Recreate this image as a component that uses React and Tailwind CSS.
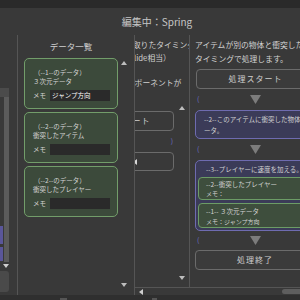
const jp = "font-['Noto_Sans_CJK_JP','Noto_Sans',sans-serif]";

function Tri({ dir = "down", className = "" }) {
  if (dir === "left") {
    return (
      <svg width="4" height="6" viewBox="0 0 4 6" className={className}>
        <polygon points="4,0 4,6 0,3" fill="currentColor" />
      </svg>
    );
  }
  const pts = dir === "up" ? "0,4 6,4 3,0" : "0,0 6,0 3,4";
  return (
    <svg width="6" height="4" viewBox="0 0 6 4" className={className}>
      <polygon points={pts} fill="currentColor" />
    </svg>
  );
}

function BigArrow() {
  return (
    <svg width="11" height="9" viewBox="0 0 11 9" className="text-[#7c7c7c]">
      <polygon points="0,0 11,0 5.5,9" fill="currentColor" />
    </svg>
  );
}

function DataCard({ index, name, memo }) {
  return (
    <div className="rounded-[5px] border-[1.5px] border-[#729d6a] bg-[#3c4a3b] pl-[8px] pr-[7px] pt-[9px] pb-[7px] text-[6.5px] leading-[9px] text-[#d4d4d4]">
      <p className="pl-[1px]">（--{index}--のデータ）</p>
      <p>{name}</p>
      <div className="mt-[4px] flex items-center gap-[5px]">
        <span className="w-[12px] shrink-0 whitespace-nowrap">メモ</span>
        <div className="h-[11px] flex-1 bg-[#2a2a2a] px-[2px] leading-[11px] text-white">{memo}</div>
      </div>
    </div>
  );
}

function Bracket({ mark = "(" }) {
  return (
    <div className="grid h-[15px] grid-cols-[1fr_auto_1fr] items-center">
      <span className="pl-[2px] text-[7px] leading-none text-[#6d6dc4]">{mark}</span>
      <BigArrow />
      <span />
    </div>
  );
}

function FlowButton({ label }) {
  return (
    <div className="flex h-[20px] items-center justify-center rounded-[4px] border border-[#6b6b6b] bg-[#3b3b3b] text-[8px] tracking-[1px] text-[#cfcfcf]">
      {label}
    </div>
  );
}

export default function App() {
  return (
    <div className={`flex h-[300px] w-[300px] flex-col overflow-hidden bg-[#393939] ${jp}`}>
      {/* window top */}
      <div className="h-[8px] bg-[#2a2a2a]" />
      <div className="flex h-[27px] items-center justify-center pl-[14px] text-[10px] text-[#c6c6c6]">
        編集中：Spring
      </div>

      <div className="flex min-h-0 flex-1">
        {/* left strip */}
        <div className="flex w-[18px] shrink-0 flex-col border-r border-[#555] pt-[53px] pb-[3px]">
          <div className="h-[9px] w-[9px] bg-[#4b4b4b]" />
          <div className="flex h-[166px] w-[9px]">
            <div className="flex w-[3px] flex-col justify-end gap-[3px] pb-[1px]">
              <div className="h-[18px] bg-[#5a569a]" />
              <div className="h-[14px] bg-[#5a569a]" />
            </div>
            <div className="ml-[1px] w-[5px] bg-[#5b5b5b]" />
          </div>
          <div className="flex h-[8px] w-[9px] items-center justify-center pl-[2px] text-[#cfcfcf]">
            <Tri />
          </div>
          <div className="mt-[1px] h-[21px] w-[9px] rounded-r-[3px] bg-[#4a4a4a]" />
        </div>

        {/* data list */}
        <div className="flex w-[117px] shrink-0 border-r border-[#555]">
          <div className="w-[102px] pl-[6px] pr-[2px]">
            <h2 className="pt-[4px] text-center text-[8.5px] leading-[14px] text-[#d0d0d0]">データ一覧</h2>
            <div className="mt-[5px] flex flex-col gap-[3px]">
              <DataCard index="1" name="３次元データ" memo="ジャンプ方向" />
              <DataCard index="2" name="衝突したアイテム" memo="" />
              <DataCard index="2" name="衝突したプレイヤー" memo="" />
            </div>
          </div>
          <div className="flex w-[8px] flex-col items-center justify-between pt-[26px] pb-[8px] text-[#bdbdbd]">
            <Tri dir="up" />
            <Tri />
          </div>
        </div>

        {/* canvas */}
        <div className="flex min-w-0 flex-1 flex-col">
          <div className="flex min-h-0 flex-1">
            {/* clipped neighbour node */}
            <div className="relative w-[55px] shrink-0 overflow-hidden border-r border-[#555] text-[7.8px] text-[#d0d0d0]">
              <div className="whitespace-nowrap pt-[4px] leading-[12.5px]">
                <p className="ml-[-10px]">を取りたタイミング</p>
                <p className="ml-[-13px]">Collide相当）</p>
                <p>&nbsp;</p>
                <p className="ml-[-16px]">コンポーネントが</p>
              </div>
              <div className="mt-[22px] ml-[-62px] flex h-[20px] w-[101px] items-center justify-center rounded-[4px] border border-[#6b6b6b] text-[8px] tracking-[1px]">
                処理スタート
              </div>
              <div className="flex h-[21px] items-center justify-end pr-[16px] text-[7px] text-[#6d6dc4]">)</div>
              <div className="ml-[-62px] flex h-[19px] w-[101px] items-center justify-end rounded-[4px] border border-[#6b6b6b] pr-[36px] text-[#d8d8d8]">
                <Tri dir="left" />
              </div>
              <div className="absolute top-[71px] right-[4px] text-[#bdbdbd]">
                <Tri dir="up" />
              </div>
              <div className="absolute bottom-[7px] right-[4px] text-[#bdbdbd]">
                <Tri />
              </div>
            </div>

            {/* current node */}
            <div className="min-w-0 flex-1 overflow-hidden pl-[5px]">
              <div className="w-[120px] text-[#d2d2d2]">
                <p className="whitespace-nowrap pt-[3px] text-[7.8px] leading-[13.5px]">
                  アイテムが別の物体と衝突した
                  <br />
                  タイミングで処理します。
                </p>
                <div className="mt-[4px] ml-[1px]">
                  <FlowButton label="処理スタート" />
                </div>
                <div className="mt-[3px]">
                  <Bracket />
                </div>
                <div className="mt-[3px] rounded-[5px] border-[1.5px] border-[#6e6bb0] bg-[#3b3b58] pl-[8px] pt-[3px] pb-[2px] text-[6.5px] leading-[11px]">
                  <p className="whitespace-nowrap">--2--このアイテムに衝突した物体のデ</p>
                  <p>ータ。</p>
                </div>
                <div className="mt-[3px]">
                  <Bracket />
                </div>
                <div className="mt-[3px] rounded-[5px] border-[1.5px] border-[#6e6bb0] bg-[#3b3b58] pl-[2px] pt-[3px] pb-[2px] text-[6.5px]">
                  <p className="pl-[8px] leading-[11px]">--3--プレイヤーに速度を加える。</p>
                  <div className="mt-[2px] flex flex-col gap-[3px]">
                    <div className="h-[23px] rounded-[4px] border-[1.5px] border-[#6c9c66] bg-[#3e4e3d] pl-[7px] pt-[2px] leading-[9px]">
                      <p>--2--衝突したプレイヤー</p>
                      <p className="text-[6px]">メモ：</p>
                    </div>
                    <div className="h-[25px] rounded-[4px] border-[1.5px] border-[#6c9c66] bg-[#3e4e3d] pl-[7px] pt-[3px] leading-[9.5px]">
                      <p>--1-- ３次元データ</p>
                      <p className="text-[6px]">メモ：ジャンプ方向</p>
                    </div>
                  </div>
                </div>
                <div className="mt-[2px]">
                  <Bracket />
                </div>
                <div className="mt-[2px]">
                  <FlowButton label="処理終了" />
                </div>
              </div>
            </div>
          </div>

          {/* horizontal scrollbar */}
          <div className="flex h-[8px] items-center justify-between border-t border-[#555] pl-[4px] text-[#cfcfcf]">
            <Tri dir="left" />
            <div className="h-[5px] w-[18px] rounded-l-full bg-[#5e5e5e]" />
          </div>
        </div>
      </div>

      {/* bottom band */}
      <div className="flex h-[5px] items-end bg-[#2f2f2f]">
        <div className="ml-[60px] h-[2px] w-[7px] bg-[#555]" />
        <div className="ml-[85px] h-[2px] w-[5px] bg-[#555]" />
      </div>
    </div>
  );
}
